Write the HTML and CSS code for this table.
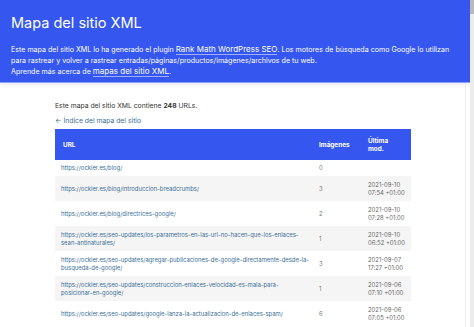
FILE: index.html
```html
<!DOCTYPE html>
<html lang="es">
<head>
<meta charset="utf-8">
<title>Mapa del sitio XML</title>
<link rel="stylesheet" href="styles.css">
</head>
<body>
<div class="page">
  <div class="viewport">
    <header class="hero">
      <h1 class="title">Mapa del sitio XML</h1>
      <p class="intro">Este mapa del sitio XML lo ha generado el plugin <a class="hero-link" href="#">Rank Math WordPress SEO</a>. Los motores de búsqueda como Google lo utilizan<br>para rastrear y volver a rastrear entradas/páginas/productos/imágenes/archivos de tu web.</p>
      <p class="intro">Aprende más acerca de <a class="hero-link" href="#">mapas del sitio XML</a>.</p>
    </header>
    <main class="content">
      <p class="count">Este mapa del sitio XML contiene <strong>248</strong> URLs.</p>
      <p class="back"><a href="#">← Índice del mapa del sitio</a></p>
      <table class="sitemap">
        <colgroup>
          <col class="c-url">
          <col class="c-img">
          <col class="c-mod">
        </colgroup>
        <thead>
          <tr><th>URL</th><th>Imágenes</th><th class="th-mod">Última mod.</th></tr>
        </thead>
        <tbody>
          <tr class="short"><td><a href="#">https://ockier.es/blog/</a></td><td class="num">0</td><td></td></tr>
          <tr><td><a href="#">https://ockier.es/blog/introduccion-breadcrumbs/</a></td><td class="num">3</td><td>2021-09-10 07:54 +01:00</td></tr>
          <tr><td><a href="#">https://ockier.es/blog/directrices-google/</a></td><td class="num">2</td><td>2021-09-10 07:28 +01:00</td></tr>
          <tr><td><a href="#">https://ockier.es/seo-updates/los-parametros-en-las-url-no-hacen-que-los-enlaces-sean-antinaturales/</a></td><td class="num">1</td><td>2021-09-10 06:52 +01:00</td></tr>
          <tr><td><a href="#">https://ockier.es/seo-updates/agregar-publicaciones-de-google-directamente-desde-la-busqueda-de-google/</a></td><td class="num">3</td><td>2021-09-07 17:27 +01:00</td></tr>
          <tr><td><a href="#">https://ockier.es/seo-updates/construccion-enlaces-velocidad-es-mala-para-posicionar-en-google/</a></td><td class="num">1</td><td>2021-09-06 07:10 +01:00</td></tr>
          <tr><td><a href="#">https://ockier.es/seo-updates/google-lanza-la-actualizacion-de-enlaces-spam/</a></td><td class="num">6</td><td>2021-09-06 07:05 +01:00</td></tr>
        </tbody>
      </table>
    </main>
  </div>
  <div class="scrollbar"><div class="thumb"></div></div>
</div>
</body>
</html>
```

FILE: styles.css
```css
html, body {
  margin: 0;
  padding: 0;
  height: 100%;
  overflow: hidden;
}
body {
  font-family: "Inter", "Liberation Sans", sans-serif;
  color: #444;
  background: #fff;
}
.page {
  display: flex;
  height: 327px;
}
.viewport {
  flex: 1;
  min-width: 0;
  overflow: hidden;
  position: relative;
}
.viewport::after {
  content: "";
  position: absolute;
  top: 84px;
  right: 4px;
  bottom: 0;
  width: 1px;
  background: #ececec;
}
.scrollbar {
  width: 4px;
  background: #ececec;
  display: flex;
  flex-direction: column;
}
.thumb {
  height: 14px;
  background: #b9b9b9;
}
.hero {
  background: #3557ef;
  color: #fff;
  padding: 14px 11px 8px;
  height: 83px;
  box-sizing: border-box;
  box-shadow: 0 2px 4px rgba(0,0,0,0.08);
  border-bottom: 1px solid #8aa0f5;
}
.title {
  margin: 0 0 12px;
  font-size: 14.5px;
  font-weight: 400;
  line-height: 18px;
}
.intro {
  margin: 0;
  font-size: 7.1px;
  line-height: 10.5px;
  white-space: nowrap;
}
.hero-link {
  color: #fff;
  text-decoration: none;
  font-size: 8px;
  border-bottom: 1px solid #9fb0f7;
}
.content {
  padding: 18px 0 0 55px;
}
.count {
  margin: 0;
  font-size: 6.8px;
  line-height: 10px;
  color: #333;
}
.count strong {
  font-weight: 700;
}
.back {
  margin: 5px 0 0;
  font-size: 6.8px;
  line-height: 10px;
}
.back a {
  color: #3a6f98;
  text-decoration: none;
}
.sitemap {
  margin-top: 3px;
  width: 356px;
  table-layout: fixed;
  border-collapse: collapse;
  font-size: 5.9px;
}
.c-url { width: 259px; }
.c-img { width: 49px; }
.c-mod { width: 48px; }
.sitemap th {
  background: #3557ef;
  color: #fff;
  text-align: left;
  font-weight: 700;
  font-size: 6.4px;
  line-height: 8px;
  height: 31px;
  padding: 0 2px 0 8px;
  box-sizing: border-box;
}
.sitemap th:nth-child(2) {
  padding-left: 5px;
}
.sitemap th.th-mod {
  padding: 0 16px 0 5px;
}
.sitemap td {
  padding: 4px 4px 4px 6px;
  line-height: 8px;
  color: #666;
  vertical-align: middle;
  height: 25px;
  box-sizing: border-box;
  overflow-wrap: break-word;
}
.sitemap td:nth-child(2),
.sitemap td:nth-child(3) {
  padding-left: 5px;
}
.sitemap td:nth-child(3) {
  padding-right: 1px;
}
.sitemap td.num {
  color: #777;
}
.sitemap tr.short td {
  height: 16px;
}
.sitemap tbody tr:nth-child(even) td {
  background: #f5f5f5;
}
.sitemap td a {
  color: #3a6f98;
  text-decoration: none;
}
```
